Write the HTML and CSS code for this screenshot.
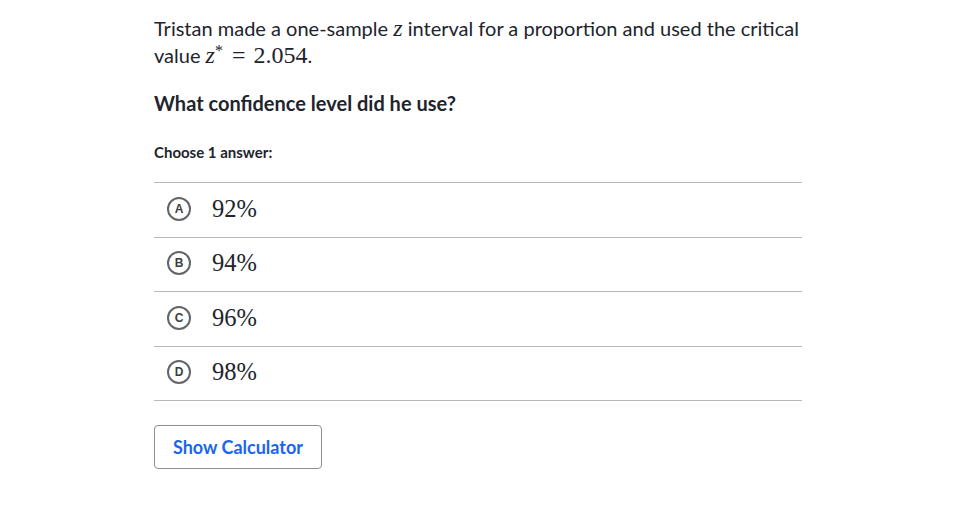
FILE: index.html
```html
<!DOCTYPE html>
<html>
<head>
<meta charset="utf-8">
<link rel="stylesheet" href="styles.css">
</head>
<body>
<main class="exercise">
  <p class="question">Tristan made a one-sample <span class="math mi">z</span> interval for a proportion and used the critical value <span class="math"><span class="mi">z</span><sup class="star">*</sup><span class="op">=</span>2.054</span>.</p>
  <p class="prompt">What confidence level did he use?</p>
  <p class="choose">Choose 1 answer:</p>
  <ul class="choices">
    <li class="choice"><span class="letter">A</span><span class="math value">92%</span></li>
    <li class="choice"><span class="letter">B</span><span class="math value">94%</span></li>
    <li class="choice"><span class="letter">C</span><span class="math value">96%</span></li>
    <li class="choice"><span class="letter">D</span><span class="math value">98%</span></li>
  </ul>
  <button class="calc">Show Calculator</button>
</main>
</body>
</html>
```
FILE: styles.css
```css
html, body {
  margin: 0;
  padding: 0;
  background: #ffffff;
}
body {
  font-family: Lato, "Open Sans", sans-serif;
  color: #21242c;
}
.exercise {
  width: 648px;
  margin-left: 154px;
  padding-top: 15px;
}
.question {
  margin: 0;
  font-size: 20px;
  line-height: 27px;
}
.math {
  font-family: "Liberation Serif", "DejaVu Serif", serif;
  font-size: 24px;
  line-height: 20px;
}
.mi {
  font-style: italic;
}
.star {
  font-size: 16px;
  line-height: 10px;
  vertical-align: 7px;
}
.op {
  margin: 0 8px 0 9px;
}
.prompt {
  margin: 20px 0 0;
  font-size: 20px;
  line-height: 28px;
  font-weight: 700;
}
.choose {
  margin: 24px 0 0;
  font-size: 15px;
  line-height: 22px;
  font-weight: 700;
}
.choices {
  list-style: none;
  margin: 19px 0 0;
  padding: 0;
  border-top: 1px solid #bababe;
}
.choice {
  display: flex;
  align-items: center;
  height: 53.5px;
  border-bottom: 1px solid #bababe;
  padding-left: 13px;
}
.letter {
  box-sizing: border-box;
  width: 24px;
  height: 24px;
  border: 2px solid #626569;
  border-radius: 50%;
  display: flex;
  align-items: center;
  justify-content: center;
  font-size: 12px;
  font-weight: 700;
  color: #3b3e40;
  font-family: "Liberation Sans", Arial, sans-serif;
  margin-top: -2px;
}
.value {
  margin-left: 21px;
  font-size: 24.5px;
  line-height: 30px;
  margin-top: -2px;
}
.calc {
  margin-top: 24px;
  width: 168px;
  height: 44px;
  background: #ffffff;
  border: 1px solid #8e8f94;
  border-radius: 4px;
  font-family: Lato, sans-serif;
  font-size: 18px;
  font-weight: 700;
  color: #1865f2;
  padding: 0;
}
```
